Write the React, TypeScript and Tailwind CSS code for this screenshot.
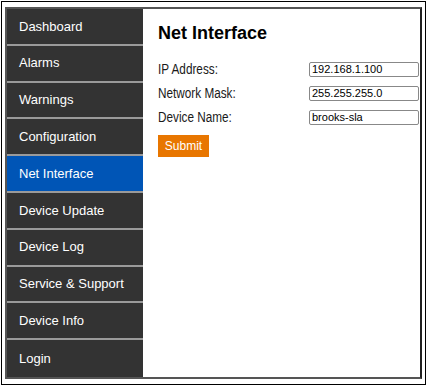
const navItems = [
  'Dashboard',
  'Alarms',
  'Warnings',
  'Configuration',
  'Net Interface',
  'Device Update',
  'Device Log',
  'Service & Support',
  'Device Info',
  'Login',
]

const fields = [
  { label: 'IP Address:', value: '192.168.1.100' },
  { label: 'Network Mask:', value: '255.255.255.0' },
  { label: 'Device Name:', value: 'brooks-sla' },
]

export default function App() {
  return (
    <div className="w-[427px] h-[386px] bg-white font-['Liberation_Sans',Arial,sans-serif]">
      {/* outer frame */}
      <div className="ml-px mt-px w-[425px] h-[384px] border border-black pl-[3px] pt-[5px]">
        <div className="flex w-[417px] h-[372px] border-2 border-[#555] border-r-[#222] bg-white">
          {/* Sidebar */}
          <nav className="w-[136px] bg-[#333333] flex flex-col">
            {navItems.map((item, i) => (
              <div
                key={item}
                className={`h-[37px] flex items-center pl-3 text-[13px] text-white ${
                  item === 'Net Interface' ? 'bg-[#0055b6]' : ''
                } ${i < navItems.length - 1 ? 'border-b-2 border-[#9a9a9a]' : ''}`}>
                {item}
              </div>
            ))}
          </nav>

          {/* Content */}
          <main className="flex-1 pl-[15px] pt-[12px]">
            <h1 className="text-[18px] font-bold text-black leading-[24px]">Net Interface</h1>
            <div className="mt-[17px] flex flex-col gap-[9px]">
              {fields.map((f) => (
                <div key={f.label} className="h-[15px] flex items-center justify-between pr-[1px]">
                  <label className="text-[14px] text-[#1a1a1a] leading-[15px] -mt-px origin-left scale-x-[0.84] whitespace-nowrap">
                    {f.label}
                  </label>
                  <input
                    readOnly
                    value={f.value}
                    className="w-[110px] h-[15px] border border-[#888] rounded-[2px] px-[2px] text-[11px] text-black outline-none"
                  />
                </div>
              ))}
            </div>
            <button className="mt-[10px] w-[51px] h-[22px] bg-[#e87600] text-white text-[12px]">
              Submit
            </button>
          </main>
        </div>
      </div>
    </div>
  )
}
